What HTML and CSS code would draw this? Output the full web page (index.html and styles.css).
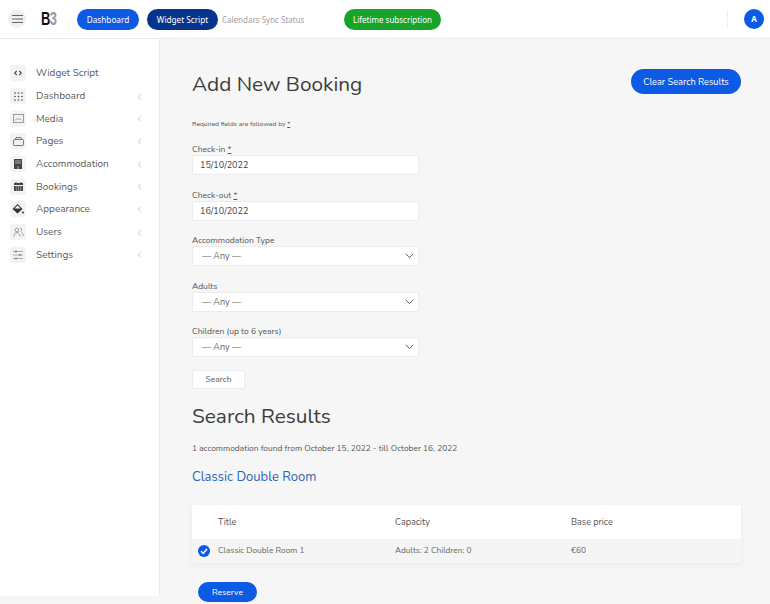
FILE: index.html
```html
<!DOCTYPE html>
<html lang="en">
<head>
<meta charset="utf-8">
<title>Add New Booking</title>
<link rel="stylesheet" href="styles.css">
</head>
<body>
<header class="topbar">
  <button class="burger" aria-label="Menu"><svg width="11" height="8" viewBox="0 0 11 8"><path d="M0 .5h11M0 4h11M0 7.500h11" stroke="#666" stroke-width="1"/></svg></button>
  <span class="logo">B<span class="logo-b">3</span></span>
  <nav class="topnav">
    <a class="pill pill-blue">Dashboard</a>
    <a class="pill pill-navy">Widget Script</a>
    <a class="toplink">Calendars Sync Status</a>
    <a class="pill pill-green">Lifetime subscription</a>
  </nav>
  <div class="divider"></div>
  <span class="avatar">A</span>
</header>
<div class="shell">
  <aside class="sidebar">
    <ul class="menu">
      <li class="item"><span class="ico"><svg width="8" height="6" viewBox="0 0 8 6"><path d="M2.700 .8.700 3l2 2.200M5.300 .8 7.300 3l-2 2.200" fill="none" stroke="#444" stroke-width="1.200"/></svg></span><span class="label">Widget Script</span></li>
      <li class="item"><span class="ico"><svg width="9" height="9" viewBox="0 0 9 9" fill="#444"><circle cx="1" cy="1" r=".8"/><circle cx="4.500" cy="1" r=".8"/><circle cx="8" cy="1" r=".8"/><circle cx="1" cy="4.500" r=".8"/><circle cx="4.500" cy="4.500" r=".8"/><circle cx="8" cy="4.500" r=".8"/><circle cx="1" cy="8" r=".8"/><circle cx="4.500" cy="8" r=".8"/><circle cx="8" cy="8" r=".8"/></svg></span><span class="label">Dashboard</span><svg class="chev" width="5" height="7" viewBox="0 0 5 7"><path d="M4.200 .5 1 3.500l3.200 3" fill="none" stroke="#c4c4c4" stroke-width=".9"/></svg></li>
      <li class="item"><span class="ico"><svg width="11" height="9" viewBox="0 0 11 9" fill="none" stroke="#888" stroke-width=".8"><rect x=".5" y=".5" width="10" height="8"/><path d="M2 6.500l2-2 1.500 1L7 4.500l2 2"/></svg></span><span class="label">Media</span><svg class="chev" width="5" height="7" viewBox="0 0 5 7"><path d="M4.200 .5 1 3.500l3.200 3" fill="none" stroke="#c4c4c4" stroke-width=".9"/></svg></li>
      <li class="item"><span class="ico"><svg width="11" height="9" viewBox="0 0 11 9" fill="none" stroke="#666" stroke-width=".9"><rect x=".5" y="2.500" width="10" height="6" rx=".8"/><path d="M2.500 2.500 3 .5h5l.5 2"/></svg></span><span class="label">Pages</span><svg class="chev" width="5" height="7" viewBox="0 0 5 7"><path d="M4.200 .5 1 3.500l3.200 3" fill="none" stroke="#c4c4c4" stroke-width=".9"/></svg></li>
      <li class="item"><span class="ico"><svg width="8" height="10" viewBox="0 0 8 10"><rect width="8" height="10" fill="#444"/><path d="M2 1v4M4 1v4M6 1v4M4 7v3" stroke="#ccc" stroke-width=".8"/></svg></span><span class="label">Accommodation</span><svg class="chev" width="5" height="7" viewBox="0 0 5 7"><path d="M4.200 .5 1 3.500l3.200 3" fill="none" stroke="#c4c4c4" stroke-width=".9"/></svg></li>
      <li class="item"><span class="ico"><svg width="9" height="9" viewBox="0 0 9 9" fill="#444"><rect x="0" y="1" width="9" height="2"/><rect x="0" y="4" width="9" height="5"/><path d="M2 0v1.500M7 0v1.500" stroke="#444"/><path d="M2.300 4v5M4.500 4v5M6.700 4v5" stroke="#ccc" stroke-width=".6"/></svg></span><span class="label">Bookings</span><svg class="chev" width="5" height="7" viewBox="0 0 5 7"><path d="M4.200 .5 1 3.500l3.200 3" fill="none" stroke="#c4c4c4" stroke-width=".9"/></svg></li>
      <li class="item"><span class="ico"><svg width="12" height="10" viewBox="0 0 12 10"><path d="M5.500 0 10.500 5 5.500 9.500.5 5z" fill="#333"/><path d="M2.500 4.500h6L5.500 1.500z" fill="#fff"/><circle cx="11" cy="8.500" r="1" fill="#333"/></svg></span><span class="label">Appearance</span><svg class="chev" width="5" height="7" viewBox="0 0 5 7"><path d="M4.200 .5 1 3.500l3.200 3" fill="none" stroke="#c4c4c4" stroke-width=".9"/></svg></li>
      <li class="item"><span class="ico"><svg width="11" height="10" viewBox="0 0 11 10" fill="none" stroke="#888" stroke-width=".8"><circle cx="4" cy="3" r="1.800"/><path d="M.8 9.500C1.200 7 2.500 5.500 4 5.500S6.800 7 7.200 9.500"/><path d="M7 1a1.800 1.800 0 0 1 .5 3.500M8.500 5.500c1 .6 1.700 2 2 3.500"/></svg></span><span class="label">Users</span><svg class="chev" width="5" height="7" viewBox="0 0 5 7"><path d="M4.200 .5 1 3.500l3.200 3" fill="none" stroke="#c4c4c4" stroke-width=".9"/></svg></li>
      <li class="item"><span class="ico"><svg width="10" height="10" viewBox="0 0 10 10" stroke="#999" stroke-width=".8"><path d="M0 1.500h10M0 5h10M0 8.500h10"/><path d="M3 .5v2M7 4v2M3 7.500v2" stroke="#777" stroke-width="1.300"/></svg></span><span class="label">Settings</span><svg class="chev" width="5" height="7" viewBox="0 0 5 7"><path d="M4.200 .5 1 3.500l3.200 3" fill="none" stroke="#c4c4c4" stroke-width=".9"/></svg></li>
    </ul>
  </aside>
  <main class="content">
    <div class="title-row">
      <h1 class="h-title">Add New Booking</h1>
      <a class="pill-large">Clear Search Results</a>
    </div>
    <p class="note">Required fields are followed by <u>*</u></p>
    <div class="fields">
      <div class="field"><label class="flabel">Check-in <u>*</u></label><div class="control">15/10/2022</div></div>
      <div class="field"><label class="flabel">Check-out <u>*</u></label><div class="control">16/10/2022</div></div>
      <div class="field"><label class="flabel">Accommodation Type</label><div class="control select"><span>— Any —</span><svg width="9" height="6" viewBox="0 0 9 6"><path d="M.7.8 4.500 4.600 8.300.8" fill="none" stroke="#555" stroke-width="1"/></svg></div></div>
      <div class="field"><label class="flabel">Adults</label><div class="control select"><span>— Any —</span><svg width="9" height="6" viewBox="0 0 9 6"><path d="M.7.8 4.500 4.600 8.300.8" fill="none" stroke="#555" stroke-width="1"/></svg></div></div>
      <div class="field"><label class="flabel">Children (up to 6 years)</label><div class="control select"><span>— Any —</span><svg width="9" height="6" viewBox="0 0 9 6"><path d="M.7.8 4.500 4.600 8.300.8" fill="none" stroke="#555" stroke-width="1"/></svg></div></div>
    </div>
    <button class="search-btn">Search</button>
    <h2 class="h-results">Search Results</h2>
    <p class="found">1 accommodation found from October 15, 2022 - till October 16, 2022</p>
    <h3 class="room">Classic Double Room</h3>
    <div class="table">
      <div class="row head"><span class="c-check"></span><span class="c-title">Title</span><span class="c-cap">Capacity</span><span class="c-price">Base price</span></div>
      <div class="row body"><span class="c-check"><svg width="12" height="12" viewBox="0 0 12 12"><circle cx="6" cy="6" r="6" fill="#0d5ae5"/><path d="M3 6.200 5.200 8.300 9 3.900" fill="none" stroke="#fff" stroke-width="1.500"/></svg></span><span class="c-title">Classic Double Room 1</span><span class="c-cap">Adults: 2 Children: 0</span><span class="c-price">€60</span></div>
    </div>
    <a class="reserve">Reserve</a>
  </main>
</div>
</body>
</html>
```
FILE: styles.css
```css
* { box-sizing: border-box; }
html, body { margin: 0; height: 100%; overflow: hidden; }
body { font-family: "Nunito", "Lato", "Noto Sans", sans-serif; color: #444; background: #f6f6f6; width: 770px; height: 604px; }
.topbar { height: 39px; background: #fff; border-bottom: 1px solid #ebebeb; display: flex; align-items: center; padding-left: 8px; font-family: "Noto Sans", sans-serif; }
.burger { width: 18px; height: 18px; border-radius: 50%; border: 0; padding: 0; background: #efefef; display: flex; align-items: center; justify-content: center; }
.logo { margin-left: 15px; width: 16px; font: 700 18px/1 "Liberation Sans", sans-serif; color: #111; transform: scaleX(.72); transform-origin: left center; white-space: nowrap; }
.logo-b { color: #999; margin-left: -1px; }
.topnav { display: flex; align-items: center; margin-left: 20px; flex: 1; font-size: 8px; }
.pill { height: 21px; border-radius: 11px; color: #fff; display: flex; align-items: center; justify-content: center; }
.pill-blue { width: 62px; background: #0d5ae5; font-size: 8.200px; }
.pill-navy { width: 71px; margin-left: 8px; background: #06348c; font-size: 8.200px; }
.toplink { margin-left: 4px; color: #a0a0a0; width: 122px; }
.pill-green { width: 97px; background: #17a428; }
.divider { width: 1px; height: 18px; background: #eee; margin-right: 16px; }
.avatar { width: 20px; height: 20px; margin-right: 6px; border-radius: 50%; background: #0d5ae5; color: #fff; font: 700 8px/20px "Noto Sans", sans-serif; text-align: center; }
.shell { display: flex; height: 557px; }
.sidebar { width: 160px; background: #fff; border-right: 1px solid #ebebeb; padding-top: 23px; }
.menu { list-style: none; margin: 0; padding: 0; }
.item { height: 22.700px; display: flex; align-items: center; padding-left: 10px; padding-right: 17px; font-size: 10px; color: #5c5c5c; }
.ico { width: 16px; height: 16px; background: #f3f3f3; border-radius: 3px; display: flex; align-items: center; justify-content: center; }
.label { margin-left: 10px; flex: 1; }
.content { flex: 1; padding: 30px 29px 0 32px; }
.title-row { display: flex; justify-content: space-between; align-items: flex-start; height: 30px; }
.h-title { margin: 0; font-size: 20.800px; line-height: 30px; font-weight: 400; color: #3d3d3d; }
.pill-large { width: 110px; height: 25px; border-radius: 13px; background: #0d5ae5; color: #fff; font-size: 9.200px; display: flex; align-items: center; justify-content: center; }
.note { margin: 19.500px 0 15.500px; font-size: 6.700px; line-height: 9px; color: #555; }
.fields { display: flex; flex-direction: column; gap: 13.600px; }
.flabel { display: block; font-size: 8.500px; line-height: 12px; color: #555; }
.control { width: 227px; height: 20px; background: #fff; border: 1px solid #ececec; border-radius: 2px; padding: 0 7px; font-size: 9px; line-height: 18px; color: #444; }
.select { display: flex; justify-content: space-between; align-items: center; padding: 0 4px 0 9px; font-size: 9px; color: #666; }
.search-btn { display: block; margin-top: 12.500px; width: 53px; height: 19px; border: 1px solid #ececec; border-radius: 2px; background: #fff; padding: 0; font: 8.500px "Nunito", "Lato", sans-serif; color: #555; }
.h-results { margin: 13px 0 0; font-size: 20.800px; font-weight: 400; line-height: 28px; color: #3d3d3d; }
.found { margin: 13px 0 0; font-size: 8.400px; line-height: 12px; color: #555; }
.room { margin: 13.500px 0 0; font-size: 13px; font-weight: 400; line-height: 18px; color: #2a63b8; }
.table { margin-top: 18.500px; width: 549px; box-shadow: 0 2px 6px rgba(0,0,0,.06); }
.row { display: flex; align-items: center; font-size: 9px; color: #555; }
.head { height: 34px; background: #fff; }
.body { height: 24px; background: #f5f5f5; color: #666; font-size: 8.300px; }
.c-check { width: 26px; padding-left: 6px; display: flex; }
.c-title { width: 177px; }
.c-cap { width: 176px; }
.reserve { display: flex; align-items: center; justify-content: center; width: 59px; height: 20px; margin: 19px 0 0 6px; border-radius: 10px; background: #0d5ae5; color: #fff; font-size: 8.500px; }
```
